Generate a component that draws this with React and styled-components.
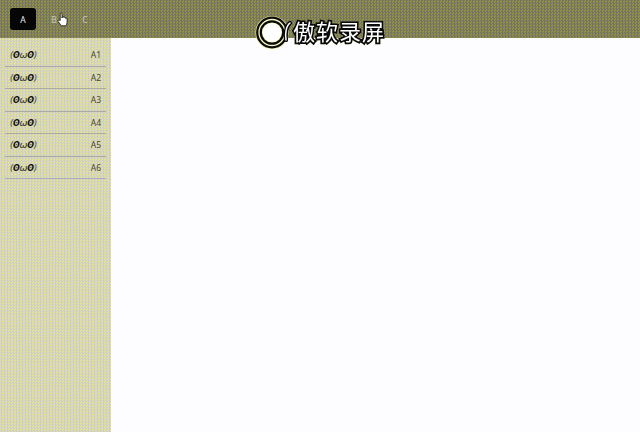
import React from "react";
import styled, { createGlobalStyle } from "styled-components";

const GlobalStyle = createGlobalStyle`
  html, body {
    margin: 0;
    padding: 0;
    background: #fdfdff;
    font-family: "Noto Sans", "Open Sans", sans-serif;
  }
`;

const Page = styled.div`
  position: relative;
  width: 640px;
  height: 432px;
  overflow: hidden;
  display: flex;
  flex-direction: column;
  background: #fdfdff;
`;

const Header = styled.header`
  height: 38px;
  flex: none;
  display: flex;
  align-items: flex-start;
  gap: 5px;
  padding: 8px 0 0 10px;
  box-sizing: border-box;
  background-color: #919140;
  background-image: conic-gradient(
    #737368 25%,
    transparent 0 50%,
    #737368 0 75%,
    transparent 0
  );
  background-size: 3px 3px;
`;

const Tab = styled.div`
  width: 26px;
  height: 22px;
  display: flex;
  align-items: center;
  justify-content: center;
  border-radius: 3px;
  font-size: 8.5px;
  font-weight: 400;
  color: ${(p) => (p.$active ? "#e8e8f0" : "#c9c9c4")};
  background: ${(p) => (p.$active ? "#060606" : "transparent")};
`;

const Body = styled.div`
  flex: 1;
  display: flex;
`;

const Sidebar = styled.aside`
  width: 111px;
  flex: none;
  box-sizing: border-box;
  padding: 6px 5px 0;
  background-color: #e4e48e;
  background-image: conic-gradient(
    #cdcdd0 25%,
    transparent 0 50%,
    #cdcdd0 0 75%,
    transparent 0
  );
  background-size: 3px 3px;
`;

const Row = styled.div`
  height: 22.5px;
  box-sizing: border-box;
  display: flex;
  align-items: center;
  justify-content: space-between;
  padding: 0 5px;
  border-bottom: 1.5px solid ${(p) => (p.$last ? "#a8a8c8" : "#aaaaa6")};
  font-size: 8.5px;
  color: #45453a;
`;

const Face = styled.span`
  font-family: "DejaVu Sans", sans-serif;
  font-style: italic;
  font-size: 8px;
  letter-spacing: -0.2px;
  color: #3a3a30;
`;

const Eye = styled.b`
  font-weight: 700;
  color: #111;
`;

const Mouth = styled.span`
  font-size: 9.5px;
`;

const Main = styled.main`
  flex: 1;
  background: #fdfdff;
`;

const Watermark = styled.div`
  position: absolute;
  left: 255px;
  top: 15px;
  display: flex;
  align-items: center;
`;

const LogoMark = styled.svg`
  width: 38px;
  height: 33px;
  display: block;
`;

const WatermarkText = styled.span`
  margin: 0 0 5px 0;
  font-family: "Noto Sans CJK SC", sans-serif;
  font-size: 22px;
  line-height: 30px;
  font-weight: 400;
  letter-spacing: 1px;
  color: #fff;
  -webkit-text-stroke: 3.5px #0a0a0a;
  paint-order: stroke fill;
  filter: drop-shadow(0 0 0.7px #eeee9c);
`;

const Cursor = styled.svg`
  position: absolute;
  left: 57px;
  top: 12px;
  width: 12px;
  height: 15px;
`;

const rows = ["A1", "A2", "A3", "A4", "A5", "A6"];

export default function App() {
  return (
    <>
      <GlobalStyle />
      <Page>
        <Header>
          <Tab $active>A</Tab>
          <Tab>B</Tab>
          <Tab>C</Tab>
        </Header>
        <Body>
          <Sidebar>
            {rows.map((name, i) => (
              <Row key={name} $last={i === rows.length - 1}>
                <Face>
                  (<Eye>ʘ</Eye>
                  <Mouth>ω</Mouth>
                  <Eye>ʘ</Eye>)
                </Face>
                <span>{name}</span>
              </Row>
            ))}
          </Sidebar>
          <Main />
        </Body>
        <Cursor viewBox="0 0 12 15">
          <path
            d="M3.2 8.5V2c0-1.2 1.8-1.2 1.8 0v4l.2-1c.3-.9 1.5-.8 1.6.1l.1.6c.2-.8 1.4-.8 1.6.1l.1.7c.3-.6 1.4-.5 1.5.4v3.3c0 1.5-.6 2.6-1.2 3.6H4.4L1.2 9.6c-.7-1 .6-2 1.4-1.3z"
            fill="#fff"
            stroke="#111"
            strokeWidth="0.8"
            strokeLinejoin="round"
          />
        </Cursor>
        <Watermark>
          <LogoMark viewBox="0 0 38 33">
            <circle cx="17" cy="16.5" r="13" fill="#fff" stroke="#eeee9c" strokeWidth="7" />
            <circle cx="17" cy="16.5" r="13" fill="none" stroke="#0a0a0a" strokeWidth="5.8" />
            <circle cx="17" cy="16.5" r="13" fill="none" stroke="#f4f4c0" strokeWidth="1.3" />
            <path d="M35 7 C31 10 30 18 31 24" fill="none" stroke="#0a0a0a" strokeWidth="4.2" strokeLinecap="round" />
            <path d="M35 7 C31 10 30 18 31 24" fill="none" stroke="#fff" strokeWidth="1.5" strokeLinecap="round" />
          </LogoMark>
          <WatermarkText>傲软录屏</WatermarkText>
        </Watermark>
      </Page>
    </>
  );
}
